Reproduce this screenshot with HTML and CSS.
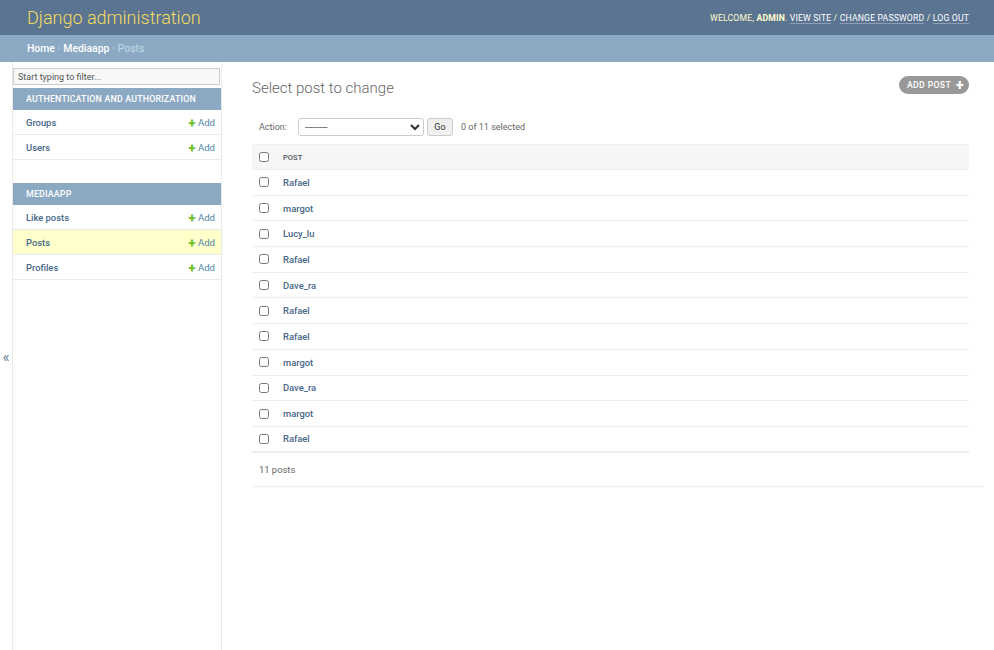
FILE: index.html
```html
<!DOCTYPE html>
<html lang="en">
<head>
    <meta charset="UTF-8">
    <title>Select post to change | Django site admin</title>
    <link rel="stylesheet" href="styles.css">
</head>
<body>
    <div id="header">
        <div id="branding">Django administration</div>
        <div id="user-tools">
            Welcome, <strong>admin</strong>.
            <a href="#">View site</a> /
            <a href="#">Change password</a> /
            <a href="#">Log out</a>
        </div>
    </div>

    <div class="breadcrumbs">
        <a href="#">Home</a> <span class="sep">›</span> <a href="#">Mediaapp</a> <span class="sep">›</span> Posts
    </div>

    <div class="main">
        <button class="toggle-nav-sidebar">«</button>

        <nav class="nav-sidebar">
            <input type="search" class="nav-filter" placeholder="Start typing to filter...">

            <div class="module">
                <div class="caption">Authentication and Authorization</div>
                <div class="model-row">
                    <a href="#">Groups</a>
                    <a href="#" class="addlink"><span class="plus">+</span> Add</a>
                </div>
                <div class="model-row">
                    <a href="#">Users</a>
                    <a href="#" class="addlink"><span class="plus">+</span> Add</a>
                </div>
            </div>

            <div class="module">
                <div class="caption">Mediaapp</div>
                <div class="model-row">
                    <a href="#">Like posts</a>
                    <a href="#" class="addlink"><span class="plus">+</span> Add</a>
                </div>
                <div class="model-row current">
                    <a href="#">Posts</a>
                    <a href="#" class="addlink"><span class="plus">+</span> Add</a>
                </div>
                <div class="model-row">
                    <a href="#">Profiles</a>
                    <a href="#" class="addlink"><span class="plus">+</span> Add</a>
                </div>
            </div>
        </nav>

        <div class="content">
            <div class="content-head">
                <h1>Select post to change</h1>
                <a href="#" class="addbutton">Add post <span class="btn-plus">+</span></a>
            </div>

            <div class="changelist">
                <div class="actions">
                    <label>Action:</label>
                    <select>
                        <option>---------</option>
                    </select>
                    <button class="go">Go</button>
                    <span class="counter">0 of 11 selected</span>
                </div>

                <table class="results">
                    <thead>
                        <tr>
                            <th class="check"><input type="checkbox"></th>
                            <th>Post</th>
                        </tr>
                    </thead>
                    <tbody>
                        <tr><td class="check"><input type="checkbox"></td><td><a href="#">Rafael</a></td></tr>
                        <tr><td class="check"><input type="checkbox"></td><td><a href="#">margot</a></td></tr>
                        <tr><td class="check"><input type="checkbox"></td><td><a href="#">Lucy_lu</a></td></tr>
                        <tr><td class="check"><input type="checkbox"></td><td><a href="#">Rafael</a></td></tr>
                        <tr><td class="check"><input type="checkbox"></td><td><a href="#">Dave_ra</a></td></tr>
                        <tr><td class="check"><input type="checkbox"></td><td><a href="#">Rafael</a></td></tr>
                        <tr><td class="check"><input type="checkbox"></td><td><a href="#">Rafael</a></td></tr>
                        <tr><td class="check"><input type="checkbox"></td><td><a href="#">margot</a></td></tr>
                        <tr><td class="check"><input type="checkbox"></td><td><a href="#">Dave_ra</a></td></tr>
                        <tr><td class="check"><input type="checkbox"></td><td><a href="#">margot</a></td></tr>
                        <tr><td class="check"><input type="checkbox"></td><td><a href="#">Rafael</a></td></tr>
                    </tbody>
                </table>

                <p class="paginator">11 posts</p>
            </div>
        </div>
    </div>
</body>
</html>
```

FILE: styles.css
```css
* {
    margin: 0;
    padding: 0;
    box-sizing: border-box;
}

body {
    font-family: Roboto, "Liberation Sans", Arial, sans-serif;
    color: #333;
    background: #fff;
    font-size: 10px;
}

a {
    text-decoration: none;
}

#header {
    height: 35px;
    background: #5a7492;
    display: flex;
    align-items: center;
    justify-content: space-between;
    padding: 0 25px 0 27px;
}

#branding {
    color: #f5dd5d;
    font-size: 18px;
    font-weight: 300;
}

#user-tools {
    color: #ffc;
    font-size: 8.7px;
    text-transform: uppercase;
    letter-spacing: 0.15px;
    padding-top: 1px;
}

#user-tools strong {
    font-weight: 700;
}

#user-tools a {
    color: #fff;
    border-bottom: 1px solid rgba(255, 255, 255, 0.3);
}

.breadcrumbs {
    height: 27px;
    background: #8ca9c3;
    color: #c6dbe9;
    font-size: 10.4px;
    padding: 0 27px;
    display: flex;
    align-items: center;
    gap: 3px;
}

.breadcrumbs a {
    color: #fff;
    font-weight: 500;
}

.breadcrumbs .sep {
    font-size: 8px;
    color: #c6dbe9;
}

.main {
    display: flex;
    min-height: 588px;
}

.toggle-nav-sidebar {
    width: 13px;
    border: 0;
    border-right: 1px solid #eaeaea;
    background: #fff;
    color: #667b93;
    font-size: 15px;
    font-family: inherit;
    padding-top: 2px;
}

.nav-sidebar {
    width: 209px;
    border-right: 1px solid #eaeaea;
    padding-top: 6px;
}

.nav-filter {
    display: block;
    width: 207px;
    height: 17px;
    margin: 0 0 3px 0;
    border: 1px solid #ccc;
    background: #f8f8f8;
    font-family: inherit;
    font-size: 9px;
    padding: 0 4px;
    color: #333;
}

.nav-filter::placeholder {
    color: #555;
}

.module {
    margin-bottom: 23px;
}

.caption {
    height: 22px;
    background: #8ca9c3;
    color: #fff;
    font-size: 8.8px;
    font-weight: 500;
    text-transform: uppercase;
    letter-spacing: 0.2px;
    padding: 0 13px;
    display: flex;
    align-items: center;
}

.model-row {
    height: 25px;
    border-bottom: 1px solid #eaeaea;
    display: flex;
    align-items: center;
    justify-content: space-between;
    padding: 0 6px 0 13px;
}

.model-row a {
    color: #476789;
    font-size: 9.4px;
    font-weight: 500;
}

.model-row.current {
    background: #ffffcc;
}

.model-row .addlink {
    color: #4f86a6;
    font-weight: 400;
    font-size: 9.6px;
}

.plus {
    color: #70bf2b;
    font-weight: 900;
    font-size: 13px;
    line-height: 0;
    position: relative;
    top: 1px;
}

.content {
    flex: 1;
    padding: 14px 10px 0 30px;
}

.content-head {
    display: flex;
    align-items: center;
    justify-content: space-between;
    padding-right: 15px;
    height: 18px;
}

h1 {
    font-size: 15px;
    font-weight: 300;
    color: #666;
    position: relative;
    top: 3px;
}

.addbutton {
    background: #999;
    color: #fff;
    font-size: 8.6px;
    font-weight: 500;
    text-transform: uppercase;
    letter-spacing: 0.4px;
    border-radius: 10px;
    height: 18px;
    padding: 0 5px 0 8px;
    display: flex;
    align-items: center;
    gap: 5px;
}

.btn-plus {
    font-size: 14px;
    font-weight: 900;
    line-height: 1;
}

.changelist {
    margin-top: 23px;
}

.actions {
    display: flex;
    align-items: center;
    height: 19px;
    padding-left: 7px;
    margin-bottom: 8px;
    color: #666;
    font-size: 9px;
}

.actions label {
    margin-right: 11px;
}

.actions select {
    width: 126px;
    height: 18px;
    border: 1px solid #ccc;
    border-radius: 3px;
    font-family: inherit;
    font-size: 9px;
    background: #fff;
    color: #333;
    padding: 0 2px;
}

.go {
    height: 18px;
    width: 26px;
    margin-left: 3px;
    border: 1px solid #ccc;
    border-radius: 3px;
    background: #f0f0f0;
    font-family: inherit;
    font-size: 9px;
    color: #333;
}

.counter {
    margin-left: 8px;
    color: #666;
}

.results {
    width: calc(100% - 15px);
    border-collapse: collapse;
    border-bottom: 2px solid #eee;
}

.results th {
    height: 25px;
    background: #f6f6f6;
    border-top: 1px solid #eee;
    border-bottom: 1px solid #eee;
    text-align: left;
    color: #555;
    font-size: 7.6px;
    font-weight: 500;
    text-transform: uppercase;
    padding-left: 6px;
}

.results td {
    height: 25.7px;
    border-bottom: 1px solid #eee;
    padding-left: 6px;
    vertical-align: middle;
}

.results th.check,
.results td.check {
    width: 25px;
    padding-left: 7px;
}

.results input[type="checkbox"] {
    width: 10px;
    height: 10px;
    display: block;
}

.results td a {
    color: #476789;
    font-size: 9.4px;
    font-weight: 500;
}

.paginator {
    height: 34px;
    display: flex;
    align-items: center;
    padding-left: 7px;
    color: #666;
    font-size: 9.4px;
    border-bottom: 1px solid #eee;
}
```
